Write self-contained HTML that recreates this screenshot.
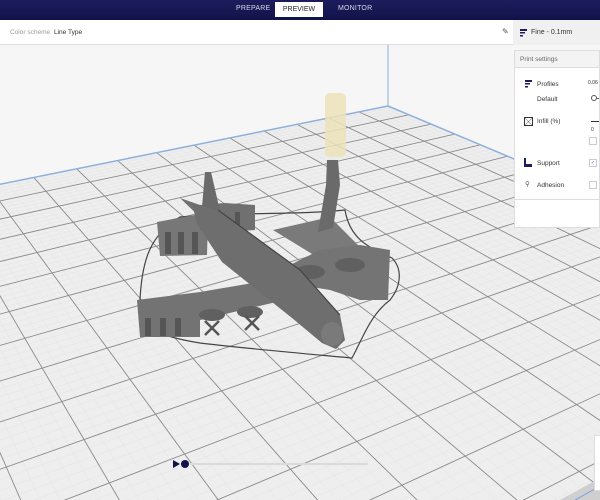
<!DOCTYPE html>
<html><head><meta charset="utf-8"><style>
*{margin:0;padding:0;box-sizing:border-box}
html,body{width:600px;height:500px;overflow:hidden}
body{position:relative;background:#f6f6f6;font-family:"Liberation Sans",sans-serif}
#top{position:absolute;left:0;top:0;width:600px;height:20px;background:linear-gradient(#1d1d5e,#12124a)}
.tab{position:absolute;top:5px;font-size:7px;color:#d8d8e8;letter-spacing:.2px}
#pv{position:absolute;left:275px;top:2px;width:48px;height:15px;background:#fff;color:#222;font-size:7px;text-align:center;line-height:15px}
#hdr{position:absolute;left:0;top:20px;width:513px;height:25px;background:#fff;border-bottom:1px solid #ddd;font-size:6.5px}
#hdr2{position:absolute;left:513px;top:20px;width:87px;height:25px;background:#f0f0f0;font-size:7px;color:#333}
#panel{position:absolute;left:514px;top:50px;width:86px;height:178px;background:#fff;border:1px solid #ddd;font-size:6.5px;color:#333;overflow:hidden}
.ph{height:17px;background:#f3f3f3;border-bottom:1px solid #ddd;color:#666;padding:5px 5px}
.r{position:absolute}
svg{position:absolute;left:0;top:0}
</style></head><body>
<svg id="s" width="600" height="500"></svg>
<div id="top">
<div class="tab" style="left:236px">PREPARE</div>
<div id="pv">PREVIEW</div>
<div class="tab" style="left:338px">MONITOR</div>
</div>
<div id="hdr"><span style="position:absolute;left:10px;top:9px;color:#999">Color scheme</span><span style="position:absolute;left:54px;top:9px;color:#333">Line Type</span><span style="position:absolute;left:502px;top:7px;color:#555;font-size:8px">✎</span></div>
<div id="hdr2"><svg width="10" height="10" style="left:6px;top:8px"><rect x="1" y="1" width="7" height="2" fill="#1d1d5e"/><rect x="1" y="4" width="5" height="1.5" fill="#1d1d5e"/><rect x="1" y="7" width="3" height="1.5" fill="#1d1d5e"/></svg><span style="position:absolute;left:18px;top:9px">Fine - 0.1mm</span></div>
<div id="panel"><div class="ph">Print settings</div>
<svg width="10" height="10" style="left:9px;top:28px"><rect x="1" y="1" width="7" height="2" fill="#1d1d5e"/><rect x="1" y="4" width="5" height="1.5" fill="#1d1d5e"/><rect x="1" y="7" width="3" height="1.5" fill="#1d1d5e"/></svg>
<span class="r" style="left:22px;top:30px">Profiles</span><span class="r" style="left:22px;top:45px">Default</span>
<span class="r" style="left:73px;top:29px;font-size:5px">0.06</span>
<span class="r" style="left:76px;top:44px;width:6px;height:6px;border:1px solid #555;border-radius:50%"></span><span class="r" style="left:82px;top:47px;width:10px;height:1px;background:#555"></span>
<span class="r" style="left:9px;top:66px;width:9px;height:9px;border:1px solid #333;background:linear-gradient(45deg,transparent 45%,#333 48%,transparent 52%),linear-gradient(-45deg,transparent 45%,#333 48%,transparent 52%)"></span>
<span class="r" style="left:22px;top:67px">Infill (%)</span>
<span class="r" style="left:76px;top:70px;width:14px;height:1px;background:#333"></span>
<span class="r" style="left:76px;top:76px;font-size:5px">0</span>
<span class="r" style="left:74px;top:86px;width:8px;height:8px;border:1px solid #ccc"></span>
<span class="r" style="left:9px;top:107px;width:8px;height:9px;border-left:2px solid #1d1d5e;border-bottom:3px solid #1d1d5e"></span>
<span class="r" style="left:22px;top:109px">Support</span>
<span class="r" style="left:74px;top:108px;width:8px;height:8px;border:1px solid #ccc;font-size:5px;color:#36c;text-align:center;line-height:7px">✓</span>
<span class="r" style="left:10px;top:129px;color:#555">⚲</span>
<span class="r" style="left:22px;top:131px">Adhesion</span>
<span class="r" style="left:74px;top:130px;width:8px;height:8px;border:1px solid #ccc"></span>
<div class="r" style="left:0;top:148px;width:90px;height:1px;background:#ddd"></div>
</div>
<div style="position:absolute;left:594px;top:435px;width:8px;height:56px;background:#fff;border:1px solid #ddd"></div>
<script>
var s=document.getElementById('s'),h='';
function q(a,b,c,d,u,v){
 var x0=a[0],y0=a[1],x1=b[0],y1=b[1],x2=c[0],y2=c[1],x3=d[0],y3=d[1];
 var dx1=x1-x2,dx2=x3-x2,dy1=y1-y2,dy2=y3-y2,sx=x0-x1+x2-x3,sy=y0-y1+y2-y3;
 var den=dx1*dy2-dx2*dy1,g=(sx*dy2-dx2*sy)/den,hh=(dx1*sy-sx*dy1)/den;
 var A=x1-x0+g*x1,B=x3-x0+hh*x3,C=x0,D=y1-y0+g*y1,E=y3-y0+hh*y3,F=y0;
 var w=g*u+hh*v+1;return [(A*u+B*v+C)/w,(D*u+E*v+F)/w];}
var BR=[388,106],BL=[-400,265],FL=[-700,1300],FR=[950,342];
function P(u,v){return q(BR,BL,FL,FR,u,v);}
var poly=[P(0,0),P(1,0),P(1,1),P(0,1)].map(p=>p.join(',')).join(' ');
h+='<polygon points="'+poly+'" fill="#eeeeee"/>';
var N=18,M=15,i,a,b;
for(i=0;i<=N*5;i++){a=P(i/(N*5),0);b=P(i/(N*5),1);h+='<line x1="'+a[0]+'" y1="'+a[1]+'" x2="'+b[0]+'" y2="'+b[1]+'" stroke="#e2e2e2" stroke-width="0.4"/>';}
for(i=0;i<=M*5;i++){a=P(0,i/(M*5));b=P(1,i/(M*5));h+='<line x1="'+a[0]+'" y1="'+a[1]+'" x2="'+b[0]+'" y2="'+b[1]+'" stroke="#e2e2e2" stroke-width="0.4"/>';}
for(i=0;i<=N;i++){a=P(i/N,0);b=P(i/N,1);h+='<line x1="'+a[0]+'" y1="'+a[1]+'" x2="'+b[0]+'" y2="'+b[1]+'" stroke="#8a8a8a" stroke-width="0.9"/>';}
for(i=0;i<=M;i++){a=P(0,i/M);b=P(1,i/M);h+='<line x1="'+a[0]+'" y1="'+a[1]+'" x2="'+b[0]+'" y2="'+b[1]+'" stroke="#8a8a8a" stroke-width="0.9"/>';}
h+='<line x1="'+BL[0]+'" y1="'+BL[1]+'" x2="388" y2="106" stroke="#8fb0dc" stroke-width="1.5"/>';
h+='<line x1="388" y1="106" x2="950" y2="342" stroke="#8fb0dc" stroke-width="1.5"/>';
h+='<line x1="388" y1="45" x2="388" y2="106" stroke="#8fb0dc" stroke-width="1"/>';
h+='<polygon points="560,500 600,478 600,500" fill="#cfcfcf"/><line x1="575" y1="500" x2="600" y2="486" stroke="#7aa0e0"/>';
h+='<path d="M180,217 C150,235 142,260 140,300 C138,325 150,335 200,343 C260,350 320,355 352,358 C362,340 370,315 390,300 C402,285 402,268 392,258 C370,248 350,240 345,210 C300,215 240,212 180,217 Z" fill="none" stroke="#444" stroke-width="1.2"/>';
h+='<polygon points="273,230 330,217 360,247 317,257" fill="#7a7a7a"/>';
h+='<polygon points="327,160 338,160 340,185 333,228 318,232 326,185" fill="#6a6a6a"/>';
h+='<rect x="325" y="93" width="21" height="64" rx="5" fill="#ece2b8" opacity=".85"/>';
h+='<polygon points="157,222 200,214 208,222 207,255 160,256" fill="#777"/>';
h+='<rect x="165" y="232" width="6" height="22" fill="#555"/><rect x="178" y="232" width="6" height="22" fill="#555"/><rect x="192" y="232" width="6" height="22" fill="#555"/>';
h+='<polygon points="180,198 200,205 225,203 255,205 255,230 222,232 205,222" fill="#707070"/>';
h+='<rect x="235" y="212" width="5" height="18" fill="#555"/>';
h+='<polygon points="205,172 211,172 224,228 200,230" fill="#6a6a6a"/>';
h+='<polygon points="137,300 200,292 270,280 285,300 200,320 200,337 140,337" fill="#737373"/>';
h+='<rect x="145" y="318" width="6" height="18" fill="#555"/><rect x="160" y="318" width="6" height="18" fill="#555"/><rect x="175" y="318" width="6" height="18" fill="#555"/>';
h+='<ellipse cx="212" cy="315" rx="13" ry="6" fill="#606060"/><ellipse cx="250" cy="312" rx="13" ry="6" fill="#606060"/>';
h+='<path d="M205,335 l14,-14 M205,321 l14,14 M245,330 l14,-14 M245,316 l14,14" stroke="#555" stroke-width="2.5"/>';
h+='<polygon points="290,265 320,250 360,245 390,250 388,300 360,300 330,290 300,285" fill="#747474"/>';
h+='<ellipse cx="310" cy="272" rx="15" ry="7" fill="#606060"/><ellipse cx="350" cy="265" rx="15" ry="7" fill="#606060"/>';
h+='<polygon points="192,203 218,210 300,270 340,315 345,340 336,349 322,343 292,318 222,262 197,224" fill="#6e6e6e"/>';
h+='<path d="M218,210 L300,270 L340,315" stroke="#444" stroke-width="1.2" fill="none"/>';
h+='<ellipse cx="332" cy="334" rx="11" ry="12" fill="#7a7a7a"/>';
h+='<line x1="190" y1="464" x2="368" y2="464" stroke="#dadada" stroke-width="2"/>';
h+='<polygon points="173,460 180,464 173,468" fill="#12124a"/><circle cx="185" cy="464" r="4" fill="#12124a"/>';
s.innerHTML=h;
</script>
</body></html>
